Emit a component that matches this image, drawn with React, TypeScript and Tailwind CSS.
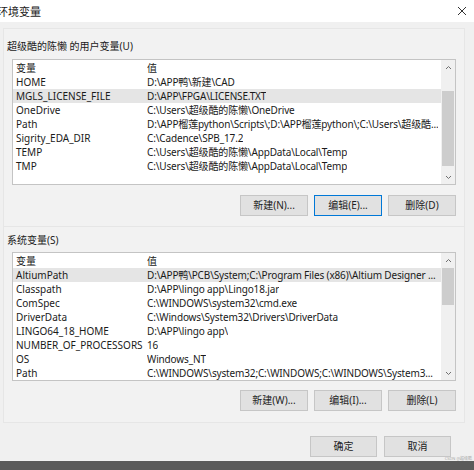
import { ReactNode } from "react";

const font = "font-['Noto_Sans','Noto_Sans_CJK_SC',sans-serif]";

const userVars: [string, string][] = [
  ["HOME", "D:\\APP鸭\\新建\\CAD"],
  ["MGLS_LICENSE_FILE", "D:\\APP\\FPGA\\LICENSE.TXT"],
  ["OneDrive", "C:\\Users\\超级酷的陈懒\\OneDrive"],
  ["Path", "D:\\APP榴莲python\\Scripts\\;D:\\APP榴莲python\\;C:\\Users\\超级酷..."],
  ["Sigrity_EDA_DIR", "C:\\Cadence\\SPB_17.2"],
  ["TEMP", "C:\\Users\\超级酷的陈懒\\AppData\\Local\\Temp"],
  ["TMP", "C:\\Users\\超级酷的陈懒\\AppData\\Local\\Temp"],
];

const sysVars: [string, string][] = [
  ["AltiumPath", "D:\\APP鸭\\PCB\\System;C:\\Program Files (x86)\\Altium Designer ..."],
  ["Classpath", "D:\\APP\\lingo app\\Lingo18.jar"],
  ["ComSpec", "C:\\WINDOWS\\system32\\cmd.exe"],
  ["DriverData", "C:\\Windows\\System32\\Drivers\\DriverData"],
  ["LINGO64_18_HOME", "D:\\APP\\lingo app\\"],
  ["NUMBER_OF_PROCESSORS", "16"],
  ["OS", "Windows_NT"],
  ["Path", "C:\\WINDOWS\\system32;C:\\WINDOWS;C:\\WINDOWS\\System3..."],
];

function Chevron({ up }: { up?: boolean }) {
  return (
    <svg width="7" height="5" viewBox="0 0 7 5" className="text-[#707070]">
      <path d={up ? "M1 4 L3.5 1.5 L6 4" : "M1 1 L3.5 3.5 L6 1"} fill="none" stroke="currentColor" strokeWidth="1" />
    </svg>
  );
}

function Row({ name, value, active }: { name: string; value: string; active?: boolean }) {
  return (
    <div className={`flex h-[14px] items-center whitespace-nowrap ${active ? "bg-[#e5e5e5]" : ""}`}>
      <span className="w-[134px] shrink-0 pl-[3px]">{name}</span>
      <span className="overflow-hidden tracking-[-0.15px]">{value}</span>
    </div>
  );
}

function VarList({
  rows,
  height,
  thumbTop,
  thumbHeight,
  activeIdx,
}: {
  rows: [string, string][];
  height: string;
  thumbTop: string;
  thumbHeight: string;
  activeIdx: number;
}) {
  return (
    <div className={`flex ${height} border border-[#c4c4c4] bg-white`}>
      <div className="flex-1 overflow-hidden pt-[1px]">
        <Row name="变量" value="值" />
        {rows.map(([n, v], i) => (
          <Row key={n + i} name={n} value={v} active={i === activeIdx} />
        ))}
      </div>
      <div className="flex w-[14px] flex-col bg-[#f0f0f0]">
        <div className="flex h-[14px] items-center justify-center">
          <Chevron up />
        </div>
        <div className="flex-1">
          <div className={`${thumbTop} ${thumbHeight} mx-[1px] bg-[#cdcdcd]`} />
        </div>
        <div className="flex h-[14px] items-center justify-center">
          <Chevron />
        </div>
      </div>
    </div>
  );
}

function Btn({ children, focused, w = "w-[68px]" }: { children: ReactNode; focused?: boolean; w?: string }) {
  return (
    <div
      className={`flex h-[21px] ${w} items-center justify-center border text-[10px] text-[#222] bg-[#e1e1e1] ${
        focused ? "border-[#0078d7]" : "border-[#c6c6c6]"
      }`}
    >
      {children}
    </div>
  );
}

export default function App() {
  return (
    <div className={`flex h-[470px] w-[474px] flex-col overflow-hidden bg-[#f0f0f0] text-[10px] text-[#1a1a1a] ${font}`}>
      <div className="flex h-[22px] shrink-0 items-center justify-between bg-white">
        <span className="-ml-[3px] mt-[2px] text-[11px]">环境变量</span>
        <svg width="10" height="10" viewBox="0 0 10 10" className="mr-[7px] text-[#333]">
          <path d="M1 1 L9 9 M9 1 L1 9" stroke="currentColor" strokeWidth="1" />
        </svg>
      </div>

      <div className="ml-[3px] mr-[9px] mt-[6px] flex h-[199px] flex-col border border-[#e6e6e6] bg-[#f2f2f2] px-[8px]">
        <div className="-ml-[5px] mt-[10px] h-[14px] leading-[14px]">超级酷的陈懒 的用户变量(U)</div>
        <div className="mt-[6px]">
          <VarList rows={userVars} height="h-[126px]" thumbTop="mt-[17px]" thumbHeight="h-[75px]" activeIdx={1} />
        </div>
        <div className="mt-[10px] flex justify-end gap-[6px]">
          <Btn>新建(N)...</Btn>
          <Btn focused>编辑(E)...</Btn>
          <Btn>删除(D)</Btn>
        </div>
      </div>

      <div className="ml-[3px] mr-[9px] flex h-[196px] flex-col border border-t-0 border-[#e6e6e6] bg-[#f2f2f2] px-[8px]">
        <div className="-ml-[5px] mt-[6px] h-[14px] leading-[14px]">系统变量(S)</div>
        <div className="mt-[5px]">
          <VarList rows={sysVars} height="h-[129px]" thumbTop="mt-[1px]" thumbHeight="h-[37px]" activeIdx={0} />
        </div>
        <div className="mt-[9px] flex justify-end gap-[6px]">
          <Btn>新建(W)...</Btn>
          <Btn>编辑(I)...</Btn>
          <Btn>删除(L)</Btn>
        </div>
      </div>

      <div className="mr-[23px] mt-[13px] flex justify-end gap-[7px]">
        <Btn w="w-[67px]">确定</Btn>
        <Btn w="w-[67px]">取消</Btn>
      </div>
      <div className="mr-[2px] h-[3px] text-right text-[4px] leading-[3px] text-[#aaa]">CSDN @超级酷</div>
      <div className="mt-auto h-[9px] shrink-0 bg-[#5a5a5a]" />
    </div>
  );
}
